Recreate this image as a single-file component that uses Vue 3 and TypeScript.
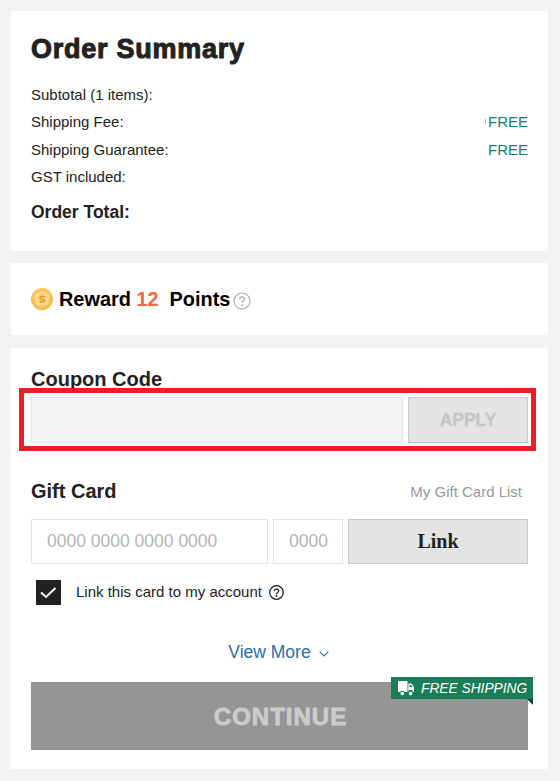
<script setup lang="ts">
const rows: { label: string; value?: string; dot?: boolean }[] = [
  { label: 'Subtotal (1 items):' },
  { label: 'Shipping Fee:', value: 'FREE', dot: true },
  { label: 'Shipping Guarantee:', value: 'FREE' },
  { label: 'GST included:' },
]
</script>

<template>
  <div class="page">
    <section class="card summary">
      <h1 class="title">Order Summary</h1>
      <div v-for="r in rows" :key="r.label" class="row">
        <span>{{ r.label }}</span>
        <span v-if="r.value" class="free"><i v-if="r.dot" class="dot"></i>{{ r.value }}</span>
      </div>
      <div class="total">Order Total:</div>
    </section>

    <section class="card reward">
      <svg class="coin" width="22" height="22" viewBox="0 0 22 22">
        <defs>
          <radialGradient id="coinFill" cx="50%" cy="45%" r="60%">
            <stop offset="0%" stop-color="#ffd98c" />
            <stop offset="75%" stop-color="#fcc052" />
            <stop offset="100%" stop-color="#f5a62a" />
          </radialGradient>
        </defs>
        <circle cx="11" cy="11" r="11" fill="url(#coinFill)" />
        <path d="M11 4 L17.5 8 L15.6 16 H6.4 L4.5 8 Z" fill="#fbd07c" stroke="#ffe8b8" stroke-width="1.1" stroke-linejoin="round" />
        <path d="M13.6 8.8 C12.4 7.8 9 7.9 9 9.7 C9 11.7 13.4 10.7 13.4 12.7 C13.4 14.2 9.8 14.2 8.6 13.1" fill="none" stroke="#e8921c" stroke-width="1.5" />
      </svg>
      <span class="reward-text">Reward <em>12</em>&nbsp; Points</span>
      <svg class="help grey" width="18" height="18" viewBox="0 0 18 18">
        <circle cx="9" cy="9" r="8" fill="none" stroke="#a8a8a8" stroke-width="1.1" />
        <path d="M6.6 7.2 C6.6 4.2 11.5 4.2 11.5 7 C11.5 8.8 9 8.8 9 11" fill="none" stroke="#a8a8a8" stroke-width="1.2" />
        <circle cx="9" cy="13.2" r="0.9" fill="#a8a8a8" />
      </svg>
    </section>

    <section class="card codes">
      <h2 class="sub coupon-title">Coupon Code</h2>
      <div class="coupon-wrap">
        <div class="coupon">
          <input class="coupon-input" disabled />
          <button class="apply" disabled>APPLY</button>
        </div>
        <div class="highlight"></div>
      </div>

      <div class="gift-head">
        <h2 class="sub">Gift Card</h2>
        <a class="gift-list">My Gift Card List</a>
      </div>
      <div class="gift-row">
        <input class="gift-num" placeholder="0000 0000 0000 0000" />
        <input class="gift-pin" placeholder="0000" />
        <button class="link">Link</button>
      </div>
      <div class="check-row">
        <span class="check">
          <svg width="25" height="25" viewBox="0 0 25 25">
            <path d="M5 12.5 L10 17 L19.5 8" fill="none" stroke="#fff" stroke-width="2" />
          </svg>
        </span>
        <span class="check-label">Link this card to my account</span>
        <svg class="help" width="15" height="15" viewBox="0 0 15 15">
          <circle cx="7.5" cy="7.5" r="6.8" fill="none" stroke="#222" stroke-width="1.3" />
          <path d="M5.4 6 C5.4 3.4 9.7 3.4 9.7 5.8 C9.7 7.3 7.5 7.3 7.5 9.2" fill="none" stroke="#222" stroke-width="1.3" />
          <circle cx="7.5" cy="11" r="0.9" fill="#222" />
        </svg>
      </div>
      <div class="more">
        <span>View More</span>
        <svg width="10" height="6" viewBox="0 0 10 6">
          <path d="M0.7 0.7 L5 5 L9.3 0.7" fill="none" stroke="#2a6fb5" stroke-width="1.1" />
        </svg>
      </div>
      <div class="continue-wrap">
        <button class="continue">CONTINUE</button>
        <div class="ship-tag">
          <svg class="truck" width="16" height="15" viewBox="0 0 16 15">
            <path fill-rule="evenodd" d="M0 0 H9.5 V11 H6.4 A2.3 2.3 0 0 0 2.2 11 H0 Z M10.3 2.5 H13.5 L16 6 V11 H14.9 A2.3 2.3 0 0 0 10.3 11 Z M11.5 3.8 V6 H14.4 L12.9 3.8 Z" fill="#fff" />
            <circle cx="4.3" cy="12.6" r="1.8" fill="#fff" />
            <circle cx="12.6" cy="12.6" r="1.8" fill="#fff" />
          </svg>
          <span>FREE SHIPPING</span>
        </div>
      </div>
    </section>
  </div>
</template>

<style>
html, body { margin: 0; background: #f3f3f3; }
</style>

<style scoped>
.page {
  box-sizing: border-box;
  width: 560px;
  height: 781px;
  padding: 11px 12px 12px 11px;
  background: #f3f3f3;
  font-family: "Liberation Sans", Arial, sans-serif;
  color: #222;
  overflow: hidden;
}
.card { background: #fff; box-sizing: border-box; padding-left: 20px; padding-right: 20px; }
.summary { height: 240px; padding-top: 23px; }
.title {
  margin: 0 0 17px;
  font-size: 27px;
  line-height: 30px;
  font-weight: 700;
  letter-spacing: 0.75px;
  -webkit-text-stroke: 1px #222;
}
.row {
  display: flex;
  justify-content: space-between;
  height: 27.4px;
  line-height: 27.4px;
  font-size: 15px;
}
.free { color: #11826a; position: relative; }
.dot { position: absolute; left: -3px; top: 11px; width: 1px; height: 5px; background: #9cc9dd; }
.total { margin-top: 10.5px; font-size: 17.5px; line-height: 22px; font-weight: 700; }
.reward {
  margin-top: 12px;
  height: 72px;
  display: flex;
  align-items: center;
}
.coin { margin-right: 6px; flex: none; }
.reward-text { font-size: 19.9px; font-weight: 700; color: #000; }
.reward-text em { font-style: normal; color: #f4683c; }
.help { flex: none; }
.help.grey { margin-left: 3px; margin-top: 3px; }
.codes { margin-top: 13px; height: 421px; padding-top: 20px; }
.sub { margin: 0; font-size: 20px; line-height: 22px; font-weight: 700; color: #222; }
.coupon-wrap { position: relative; margin-top: 7px; }
.coupon { display: flex; justify-content: space-between; height: 46px; }
.coupon-input {
  box-sizing: border-box;
  width: 372px;
  height: 46px;
  background: #f5f5f5;
  border: 1px solid #e4e4e4;
  padding: 0;
}
.apply {
  box-sizing: border-box;
  width: 120px;
  height: 46px;
  background: #e4e4e4;
  border: 1px solid #c8c8c8;
  color: #c6c6c6;
  font: 700 17.5px "Liberation Sans", Arial, sans-serif;
  -webkit-text-stroke: 0.4px #c6c6c6;
  padding: 0;
}
.highlight {
  position: absolute;
  left: -12px;
  top: -9px;
  width: 517px;
  height: 63px;
  box-sizing: border-box;
  border: 5px solid #ee1c25;
  pointer-events: none;
}
.gift-head {
  margin-top: 37px;
  display: flex;
  justify-content: space-between;
  align-items: center;
  padding-right: 6px;
}
.gift-list { font-size: 15px; color: #999; }
.gift-row { display: flex; margin-top: 17px; height: 45px; }
.gift-row input {
  box-sizing: border-box;
  height: 45px;
  border: 1px solid #e4e4e4;
  background: #fff;
  font: 17.5px "Liberation Sans", Arial, sans-serif;
  outline: none;
  min-width: 0;
}
.gift-row input::placeholder { color: #b5b5b5; opacity: 1; }
.gift-num { width: 237px; padding: 0 0 0 15px; }
.gift-pin { width: 70px; margin-left: 5px; padding: 0 0 0 15px; }
.link {
  box-sizing: border-box;
  width: 180px;
  margin-left: 5px;
  height: 45px;
  background: #e4e4e4;
  border: 1px solid #c8c8c8;
  color: #222;
  font: 700 20px "Liberation Serif", "Times New Roman", serif;
  padding: 0;
}
.check-row { display: flex; align-items: center; margin-top: 16px; padding-left: 5px; height: 25px; }
.check { width: 25px; height: 25px; background: #222; flex: none; display: block; }
.check svg { display: block; }
.check-label { margin-left: 15px; font-size: 15px; line-height: 25px; margin-top: -2px; }
.check-row .help { margin-left: 7px; }
.more {
  margin-top: 35px;
  padding-right: 2px;
  display: flex;
  justify-content: center;
  align-items: center;
  gap: 8px;
  color: #2a6fb5;
  font-size: 17.5px;
  line-height: 24px;
}
.more svg { margin-top: 3px; }
.continue-wrap { position: relative; margin-top: 18px; }
.continue {
  display: block;
  width: 100%;
  height: 68px;
  border: 0;
  background: #959595;
  color: #cbcbcb;
  font: 700 24px "Liberation Sans", Arial, sans-serif;
  letter-spacing: 1px;
  -webkit-text-stroke: 0.9px #cbcbcb;
  padding: 2px 0 0 2px;
}
.ship-tag {
  position: absolute;
  right: -5px;
  top: -5px;
  height: 22px;
  width: 142px;
  box-sizing: border-box;
  background: #1a7d56;
  color: #fff;
  display: flex;
  align-items: center;
  padding-left: 7px;
  gap: 7px;
  font-size: 13.75px;
  font-style: italic;
  white-space: nowrap;
}
.truck { margin-top: 1px; }
.ship-tag::after {
  content: "";
  position: absolute;
  right: 0;
  top: 22px;
  border-top: 6px solid #10452f;
  border-left: 6px solid transparent;
}
</style>
